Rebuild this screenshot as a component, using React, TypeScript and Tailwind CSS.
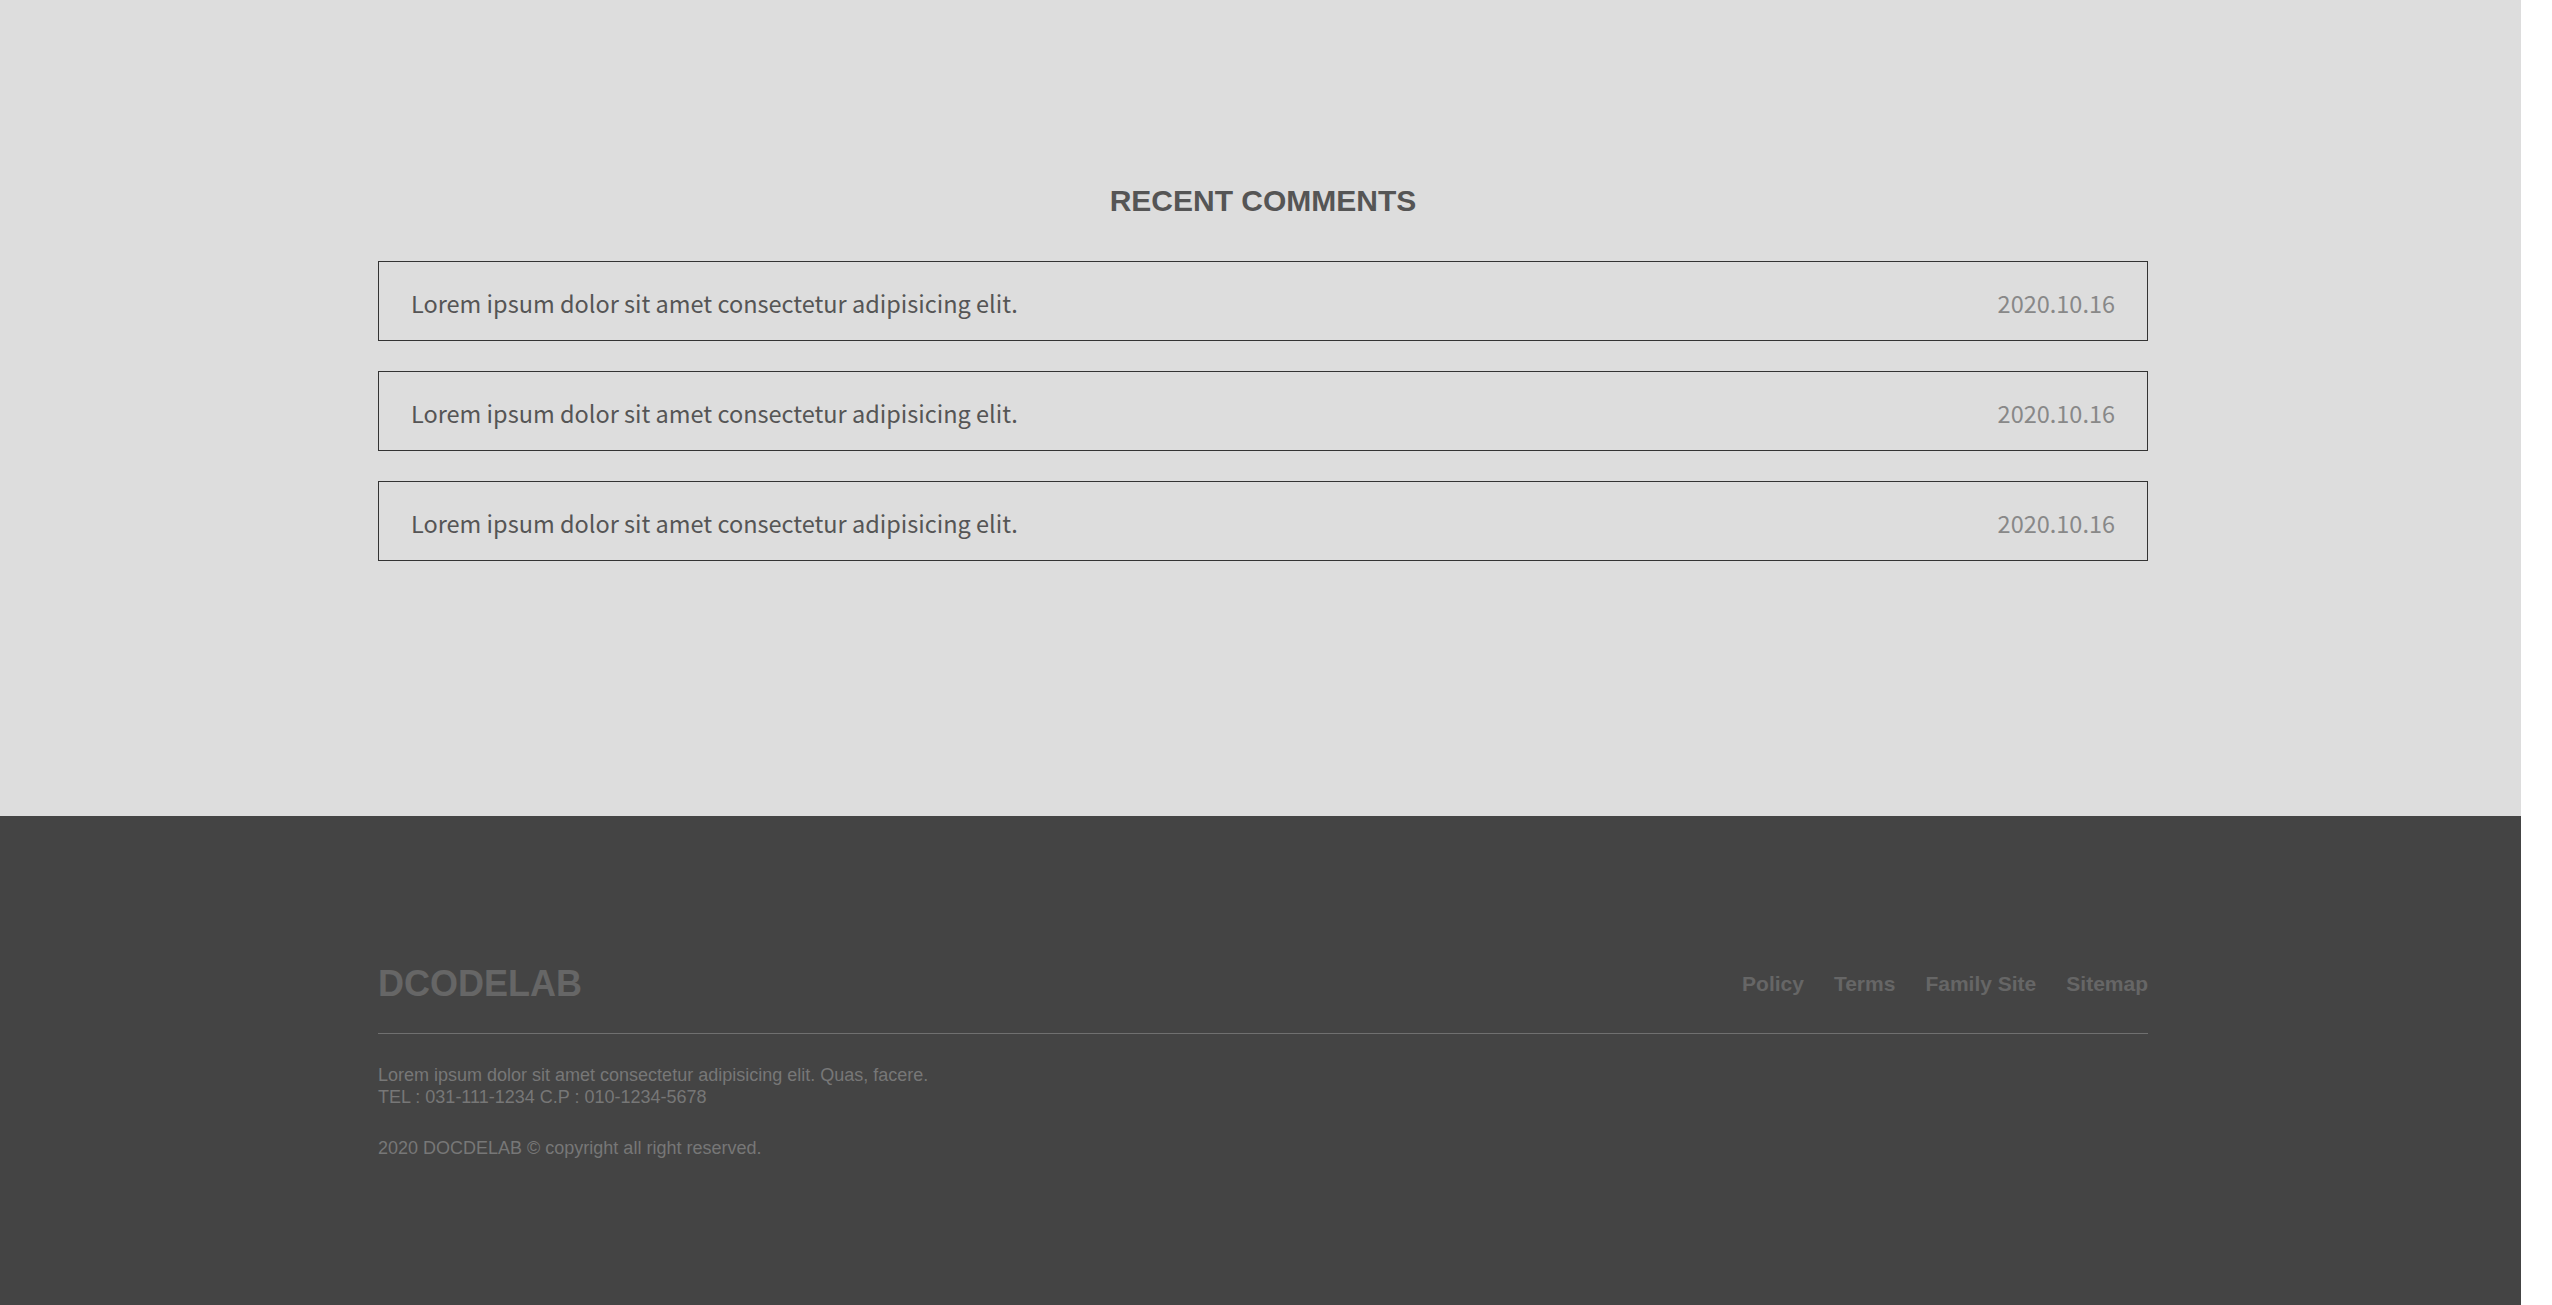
const comments = [
  { text: 'Lorem ipsum dolor sit amet consectetur adipisicing elit.', date: '2020.10.16' },
  { text: 'Lorem ipsum dolor sit amet consectetur adipisicing elit.', date: '2020.10.16' },
  { text: 'Lorem ipsum dolor sit amet consectetur adipisicing elit.', date: '2020.10.16' },
];

const links = ['Policy', 'Terms', 'Family Site', 'Sitemap'];

export default function App() {
  return (
    <div className="flex w-full bg-white">
      <div className="w-[2521px] font-['Liberation_Sans',Arial,sans-serif]">
        {/* Recent comments */}
        <section className="h-[816px] bg-[#dddddd] pt-[183px]">
          <div className="ml-[378px] w-[1770px]">
            <h2 className="mb-[42px] text-center text-[30px] font-bold leading-[36px] text-[#555555]">
              RECENT COMMENTS
            </h2>
            <ul className="flex flex-col gap-[30px]">
              {comments.map((c, i) => (
                <li
                  key={i}
                  className="flex h-[80px] items-center justify-between border border-[#333333] px-[32px] pt-[5px] font-['Noto_Sans_CJK_KR','Noto_Sans',sans-serif] text-[23.5px]"
                >
                  <span className="text-[#555555]">{c.text}</span>
                  <span className="pl-[2px] text-[#888888]">{c.date}</span>
                </li>
              ))}
            </ul>
          </div>
        </section>

        {/* Footer */}
        <footer className="min-h-[489px] bg-[#444444] pt-[146px] pb-[120px]">
          <div className="ml-[378px] w-[1770px]">
            <div className="flex items-center justify-between border-b border-[#707070] pb-[28px]">
              <h1 className="text-[36px] font-bold leading-[43px] text-[#666666]">DCODELAB</h1>
              <nav className="flex gap-[30px] text-[21px] font-bold leading-[25px] text-[#666666]">
                {links.map((l) => (
                  <a key={l} href="#">
                    {l}
                  </a>
                ))}
              </nav>
            </div>
            <div className="pt-[30px] text-[18px] leading-[22px] text-[#777777]">
              <p>Lorem ipsum dolor sit amet consectetur adipisicing elit. Quas, facere.</p>
              <p>TEL : 031-111-1234 C.P : 010-1234-5678</p>
              <p className="mt-[29px]">2020 DOCDELAB © copyright all right reserved.</p>
            </div>
          </div>
        </footer>
      </div>
    </div>
  );
}
